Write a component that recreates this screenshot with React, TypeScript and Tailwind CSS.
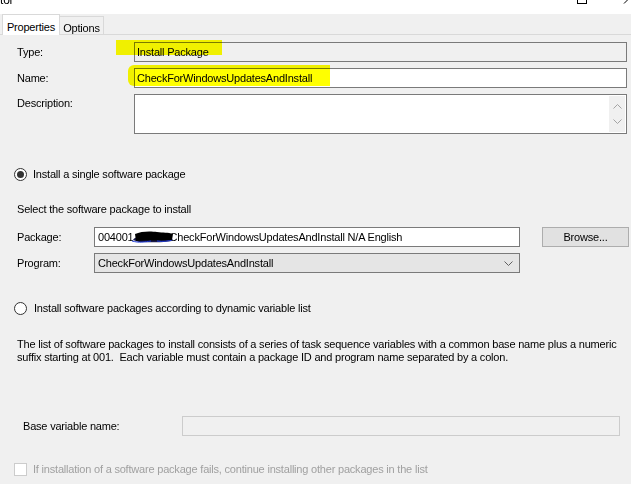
import React from "react";

const font = { fontFamily: '"Liberation Sans", Arial, sans-serif' };

const Highlight = ({ className }: { className: string }) => (
  <div className={`absolute bg-[#ffff00] mix-blend-multiply ${className}`} />
);

const Radio = ({ checked }: { checked?: boolean }) => (
  <span className="flex h-[13px] w-[13px] shrink-0 items-center justify-center rounded-full border border-[#333333] bg-white">
    {checked && <span className="h-[7px] w-[7px] rounded-full bg-[#333333]" />}
  </span>
);

const Chevron = ({ up, color }: { up?: boolean; color: string }) => (
  <svg width="9" height="5" viewBox="0 0 9 5">
    <polyline
      points={up ? "0.5,4.5 4.5,0.5 8.5,4.5" : "0.5,0.5 4.5,4.5 8.5,0.5"}
      fill="none"
      stroke={color}
      strokeWidth="1"
    />
  </svg>
);

export default function App() {
  return (
    <div
      className="relative h-[484px] w-[631px] overflow-hidden bg-[#f0f0f0] text-[11px] tracking-[-0.2px] text-black"
      style={font}
    >
      {/* window title remnant */}
      <div className="flex h-[14px] items-start bg-white">
        <span className="-mt-[7px] text-[12px] leading-[14px]">tor</span>
        <span className="ml-auto mr-[36px] h-[4px] w-[10px] border-x border-b border-black" />
        <svg width="6" height="4" viewBox="0 0 6 4" className="mr-[2px]">
          <line x1="1" y1="3.5" x2="4.5" y2="0" stroke="#000" strokeWidth="1" />
        </svg>
      </div>

      {/* tabs */}
      <div className="flex h-[21px] items-end border-b border-[#d9d9d9] pl-[2px]">
        <div className="relative z-10 -mb-px flex h-[21px] w-[58px] items-start justify-center border-x border-t border-[#d9d9d9] bg-white pt-[4px]">
          Properties
        </div>
        <div className="flex h-[18px] w-[44px] items-start justify-center border-r border-t border-[#d9d9d9] pt-[3px]">
          Options
        </div>
      </div>

      {/* general fields */}
      <div className="mt-[7px] flex h-[20px] items-center pl-[17px] pr-[4px]">
        <span className="w-[117px]">Type:</span>
        <div className="flex h-full flex-1 items-center border border-[#7a7a7a] pl-[2px]">Install Package</div>
      </div>
      <div className="mt-[6px] flex h-[20px] items-center pl-[17px] pr-[4px]">
        <span className="w-[117px]">Name:</span>
        <div className="flex h-full flex-1 items-center border border-[#7a7a7a] bg-white pl-[2px]">
          CheckForWindowsUpdatesAndInstall
        </div>
      </div>
      <div className="mt-[6px] flex h-[40px] items-start pl-[17px] pr-[4px]">
        <span className="w-[117px] pt-[1px]">Description:</span>
        <div className="flex h-full flex-1 justify-end border border-[#7a7a7a] bg-white p-px">
          <div className="flex w-[16px] flex-col items-center justify-between bg-[#f0f0f0] py-[8px]">
            <Chevron up color="#a3a3a3" />
            <Chevron color="#a3a3a3" />
          </div>
        </div>
      </div>

      {/* single package */}
      <div className="mt-[32px] flex h-[16px] items-center gap-[6px] pl-[14px]">
        <Radio checked />
        <span>Install a single software package</span>
      </div>
      <div className="mt-[20px] flex h-[14px] items-center pl-[17px]">Select the software package to install</div>
      <div className="mt-[11px] flex h-[20px] items-center pl-[17px]">
        <span className="w-[77px]">Package:</span>
        <div className="flex h-full w-[426px] items-center border border-[#7a7a7a] bg-white pl-[3px]">
          <span>004001</span>
          <svg width="44" height="16" viewBox="0 0 44 16" className="-ml-[3px] -mr-[5px]">
            <path d="M2 11 C6 5 12 13 18 7 C24 4 30 10 38 9 L41 12 C30 14 20 13 8 13 Z" fill="#1a1a4a" />
            <path d="M4 5 C10 2 20 2 26 3 C32 4 37 3 42 5 L41 11 C30 12 18 11 5 12 Z" fill="#000" />
            <path d="M1 12 C8 14 14 13 20 12" stroke="#1f3bd6" strokeWidth="1" fill="none" />
            <path d="M26 12 C32 13 37 12 42 11" stroke="#1f3bd6" strokeWidth="1" fill="none" />
          </svg>
          <span>CheckForWindowsUpdatesAndInstall N/A English</span>
        </div>
        <button className="ml-[22px] flex h-full w-[87px] items-center justify-center border border-[#adadad] bg-[#e1e1e1]">
          Browse...
        </button>
      </div>
      <div className="mt-[6px] flex h-[20px] items-center pl-[17px]">
        <span className="w-[77px]">Program:</span>
        <div className="flex h-full w-[426px] items-center border border-[#7a7a7a] bg-[#e5e5e5] pl-[3px] pr-[6px]">
          <span className="flex-1">CheckForWindowsUpdatesAndInstall</span>
          <Chevron color="#606060" />
        </div>
      </div>

      {/* dynamic list */}
      <div className="mt-[27px] flex h-[16px] items-center gap-[7px] pl-[14px]">
        <Radio />
        <span>Install software packages according to dynamic variable list</span>
      </div>
      <p className="mt-[22px] whitespace-nowrap pl-[17px] leading-[13px]">
        The list of software packages to install consists of a series of task sequence variables with a common base name plus a numeric
        <br />
        suffix starting at 001.&nbsp; Each variable must contain a package ID and program name separated by a colon.
      </p>
      <div className="mt-[52px] flex h-[20px] items-center pl-[23px]">
        <span className="w-[159px]">Base variable name:</span>
        <div className="h-full w-[438px] border border-[#cccccc]" />
      </div>
      <div className="mt-[26px] flex h-[14px] items-center gap-[6px] pl-[14px] text-[#a0a0a0]">
        <span className="h-[13px] w-[13px] border border-[#cccccc] bg-white" />
        <span>If installation of a software package fails, continue installing other packages in the list</span>
      </div>

      {/* highlighter marks */}
      <Highlight className="left-[116px] top-[40px] h-[15px] w-[106px]" />
      <Highlight className="left-[128px] top-[65px] h-[21px] w-[202px] rounded-l-[6px]" />
    </div>
  );
}
